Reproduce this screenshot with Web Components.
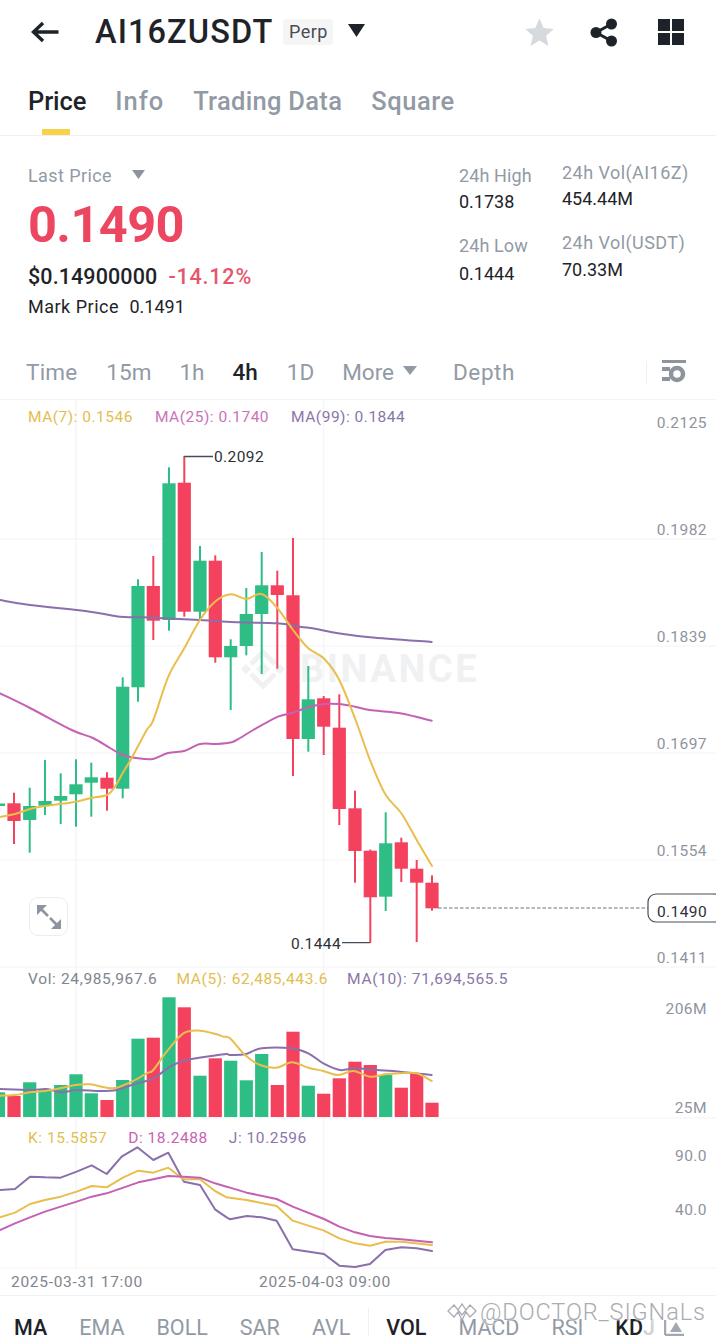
<!DOCTYPE html>
<html lang="en">
<head>
<meta charset="utf-8">
<title>AI16ZUSDT</title>
<style>
html,body{margin:0;padding:0;background:#fff}
body{width:716px;height:1336px;overflow:hidden;position:relative;font-family:Roboto,"Liberation Sans",sans-serif;color:#1E2329}
</style>
</head>
<body>
<app-header></app-header>
<tab-bar></tab-bar>
<price-panel></price-panel>
<interval-bar></interval-bar>
<kline-chart></kline-chart>
<indicator-bar></indicator-bar>
<water-mark></water-mark>
<script>
class Base extends HTMLElement{
  constructor(){super();this.attachShadow({mode:'open'}).innerHTML=this.markup();}
  markup(){return ''}
}
customElements.define('app-header',class extends Base{markup(){return `
<style>
:host{display:flex;align-items:center;height:64px;padding-left:31px;box-sizing:border-box}
svg{display:block;flex:none}
.sym{font-size:32.5px;font-weight:500;letter-spacing:1.1px;margin-left:36px;line-height:40px;color:#1E2329}
.badge{margin-left:10px;width:50px;height:26px;background:#F5F5F5;border-radius:4px;font-size:18px;line-height:26px;text-align:center;color:#474D57;letter-spacing:.5px}
.car{margin-left:15px;margin-top:-4px}
.r{margin-left:auto;display:flex;align-items:center}
</style>
<svg width="28" height="22" viewBox="0 0 28 22"><path d="M27.5 11H3M12 2 2.5 11l9.5 9" fill="none" stroke="#1E2329" stroke-width="3.4"/></svg>
<span class="sym">AI16ZUSDT</span>
<span class="badge">Perp</span>
<svg class="car" width="17" height="13" viewBox="0 0 17 13"><path d="M0 0h17L8.5 13z" fill="#1E2329"/></svg>
<div class="r" style="padding-right:32px">
<svg width="29" height="29" viewBox="0 0 29 29" style="margin-right:36px"><path d="M14.5 0.5 18.7 10l10 1-7.6 6.700 2.300 10.300-8.900-5.400-8.900 5.400 2.300-10.300L.3 11l10-1z" fill="#D6D9DD"/></svg>
<svg width="28" height="29" viewBox="0 0 28 29" style="margin-right:40px"><g fill="#1E2329"><circle cx="21.500" cy="6" r="5.500"/><circle cx="21.500" cy="23" r="5.500"/><circle cx="6" cy="14.500" r="5.500"/></g><path d="M21.500 6 6 14.500 21.500 23" fill="none" stroke="#1E2329" stroke-width="3"/></svg>
<svg width="26" height="26" viewBox="0 0 26 26"><g fill="#1E2329"><rect width="12" height="12"/><rect x="14" width="12" height="12"/><rect y="14" width="12" height="12"/><rect x="14" y="14" width="12" height="12"/></g></svg>
</div>`}});

customElements.define('tab-bar',class extends Base{markup(){return `
<style>
:host{display:flex;height:72px;box-sizing:border-box;border-bottom:1px solid #EEF0F2;padding-left:28px;gap:29px;font-size:25.500px;font-weight:500;color:#929AA5}
.t{display:flex;flex-direction:column;align-items:center;height:71px}
.t span{margin-top:23px;line-height:28px;letter-spacing:var(--ls,0)}
.on{color:#1E2329}
i{margin:auto 0 0 -2px;width:28px;height:6px;background:#F8D34A;display:block}
</style>
<div class="t on" style="--ls:-.1px"><span>Price</span><i></i></div>
<div class="t" style="--ls:1px"><span>Info</span></div>
<div class="t" style="--ls:.3px"><span>Trading Data</span></div>
<div class="t" style="--ls:.55px"><span>Square</span></div>`}});

customElements.define('stat-item',class extends Base{markup(){return `
<style>
:host{display:block;font-size:18px;line-height:26px}
.l{color:#929AA5;letter-spacing:var(--lls,0)}
.v{color:#1E2329;margin-top:var(--gap,1px)}
</style>
<div class="l">${this.getAttribute('label')}</div>
<div class="v">${this.getAttribute('value')}</div>`}});

customElements.define('price-panel',class extends Base{markup(){return `
<style>
:host{display:grid;grid-template-columns:431px 103px 1fr;height:214px;padding-left:28px;box-sizing:border-box}
.a{padding-top:27px}
.lp{display:flex;align-items:center;font-size:18px;line-height:26px;color:#929AA5;letter-spacing:.4px}
.lp svg{margin-left:20px;margin-top:-4px}
.big{font-size:50.500px;font-weight:700;line-height:56px;margin-top:8px;color:#EC4660;letter-spacing:-.6px}
.usd{font-size:21.500px;font-weight:500;line-height:26px;margin-top:11px;color:#1E2329;white-space:nowrap;letter-spacing:.1px}
.usd b{font-weight:500;color:#E5566D;margin-left:5px;letter-spacing:.8px}
.mk{font-size:18px;line-height:26px;margin-top:4px;color:#1E2329;letter-spacing:.5px}
.mk span{margin-left:6px;letter-spacing:0}
.b{padding-top:27px;--gap:0px;--lls:.1px}
.b stat-item+stat-item{margin-top:18px;--gap:2px}
.c{padding-top:24px;--gap:0px;--lls:.45px}
.c stat-item+stat-item{margin-top:18px;--gap:1px}
</style>
<div class="a">
<div class="lp"><span>Last Price</span><svg width="13" height="9" viewBox="0 0 13 9"><path d="M0 0h13L6.500 9z" fill="#8E949E"/></svg></div>
<div class="big">0.1490</div>
<div class="usd">$0.14900000<b> -14.12%</b></div>
<div class="mk">Mark Price<span> 0.1491</span></div>
</div>
<div class="b"><stat-item label="24h High" value="0.1738"></stat-item><stat-item label="24h Low" value="0.1444"></stat-item></div>
<div class="c"><stat-item label="24h Vol(AI16Z)" value="454.44M"></stat-item><stat-item label="24h Vol(USDT)" value="70.33M"></stat-item></div>`}});

customElements.define('interval-bar',class extends Base{markup(){return `
<style>
:host{display:flex;align-items:flex-start;height:50px;box-sizing:border-box;border-bottom:1px solid #F3F4F6;padding:9px 30px 0 26px;gap:28px;font-size:22.500px;line-height:26px;color:#929AA5}
.on{color:#1E2329;font-weight:500}
.m{display:flex;align-items:center}
.m svg{margin:-4px 0 0 9px}
.d{margin-left:8px;letter-spacing:.6px}
.r{margin-left:auto;display:flex;align-items:center;height:26px}
.sep{width:1px;height:23px;background:#EEF0F2;margin-right:15px}
</style>
<span style="letter-spacing:.2px">Time</span><span style="margin-left:1px">15m</span><span>1h</span><span class="on">4h</span><span style="margin-left:1px">1D</span>
<span class="m">More<svg width="14" height="9" viewBox="0 0 14 9"><path d="M0 0h14L7 9z" fill="#929AA5"/></svg></span>
<span class="d">Depth</span>
<div class="r"><i class="sep"></i><svg width="24" height="26" viewBox="0 0 24 26"><g fill="#8E949E"><rect x="0" y="1" width="24" height="3"/><rect x="0" y="8" width="8" height="4"/><rect x="0" y="18" width="8" height="4"/></g><circle cx="15" cy="15" r="6" fill="none" stroke="#8E949E" stroke-width="4.500"/></svg></div>`}});

const CANDLES=[
[-1.5,803.5,806,800,812,'g'],[14,803.3,821,792.7,844,'r'],[29.7,806,820,787.7,852.7,'g'],[45,801,805.7,760,815,'g'],
[60.7,796,800.7,773.3,824,'g'],[76,784.3,794.3,759.3,826.7,'g'],[91.3,777.3,782.7,762.7,816.7,'g'],[107,777.7,788.7,772.3,810.7,'r'],
[122.7,686.7,788.7,677.3,798.3,'g'],[138,586,687.3,579.3,701.7,'g'],[153.3,586,620.7,556,640,'r'],[169,483.3,620,467.3,630.7,'g'],
[184.3,482.7,611.7,456,616.7,'r'],[200,560.7,611.7,546,620.7,'g'],[215.3,560.7,657.3,555.3,662.7,'r'],[230.7,646,657.3,639.3,710,'g'],
[246.3,614,646,588,655.3,'g'],[261.7,585.3,614,552,674,'g'],[277.3,585.3,595,570.7,668.7,'r'],[293,595.3,739,538,776,'r'],
[308.3,699.3,739,666,751.7,'g'],[323.7,698.3,726.7,696,755,'r'],[339.3,727.7,809,694.3,825,'r'],[355,808.3,851,790.7,882.7,'r'],
[370.3,850.7,897.3,849.5,942.7,'r'],[385.7,843.3,896.7,812.3,911,'g'],[401.3,842.3,868.7,837.7,882,'r'],[416.7,868.7,882.7,860,942,'r'],
[432,882.7,908.3,875.3,910.7,'r']];
const VOLS=[1092.3,1096,1082.3,1090,1085,1074.3,1093.3,1100,1080,1038.7,1037.7,997.3,1007.3,1075.7,1058.3,1060.7,1080.3,1054,1085,1031.7,1085.7,1093.7,1078.3,1061.7,1065,1075,1087.7,1073.3,1102.7];
const GREEN='#2EBD85',RED='#F4425E',YEL='#E9BE4C',PINK='#C461B4',PUR='#8A6FAD';
const MA7=[[0,817],[15,814],[30,809],[45,806],[60,804],[76,801.7],[91,798],[107,795],[115,786.7],[122.7,773],[131.7,758],[146.7,730],[153.3,720],[168.3,676.7],[183.3,650],[200,620],[215,601.7],[230.7,594.3],[246.3,599],[261.7,594],[277.3,608],[293,630],[308.3,648.3],[323.7,658.3],[339.3,680],[356.7,723],[370,760],[385.3,794.3],[401.3,813.3],[416.7,840],[432,866]];
const MA25=[[0,693.3],[30,708],[71.7,730],[93,738],[110,748],[122.7,755],[138,758.3],[153,759],[168,753],[185,750.7],[200,744],[216.7,744],[231.7,742.3],[240,738],[253.3,730],[278,716.7],[293,712.7],[308,707.3],[323.7,704],[339,704],[355,706.7],[370,710],[400,713.3],[431.7,720.7]];
const MA99=[[0,600],[30,605],[90,611.7],[120,616.7],[143,617.3],[200,620],[240,622.3],[277,623.3],[300,626.7],[316.7,629],[338,633.3],[370,637.3],[431.7,642]];
const z7=a=>a.map(([x,y])=>[x/3,965+y/3]), z8=a=>a.map(([x,y])=>[230+x/3,965+y/3]);
const V5=[...z7([[0,392],[45,390],[90,382],[135,378],[180,370],[225,360],[270,358],[320,368],[350,368],[395,350],[440,325],[460,315],[500,260],[550,205],[600,197],[650,208],[670,215]]),...z8([[0,220],[45,270],[90,300],[140,308],[185,292],[235,308],[280,318],[325,330],[370,318],[420,335],[465,328],[510,325],[560,325],[605,348]])];
const V10=[...z7([[0,372],[90,375],[140,372],[185,382],[230,375],[300,378],[350,375],[395,360],[460,340],[510,305],[560,285],[640,272],[680,267]]),...z8([[0,270],[45,268],[95,250],[185,250],[235,265],[280,295],[330,315],[375,310],[440,315],[510,320],[605,330]])];
const z9=a=>a.map(([x,y])=>[x/3,1120+y/3]), z10=a=>a.map(([x,y])=>[230+x/3,1120+y/3]);
const KK=[...z9([[0,292],[45,278],[90,252],[135,240],[182,230],[230,215],[275,198],[320,202],[370,172],[415,152],[460,158],[505,143],[550,178],[600,178],[645,213],[680,232]]),...z10([[0,233],[50,240],[140,258],[188,302],[282,332],[328,355],[375,370],[420,377],[466,365],[514,365],[606,375]])];
const DD=[...z9([[0,330],[45,310],[90,292],[135,275],[182,260],[230,245],[275,230],[320,220],[370,203],[415,187],[460,178],[505,168],[550,170],[600,173],[645,190],[680,200]]),...z10([[0,203],[50,218],[140,237],[188,260],[282,297],[328,320],[375,337],[420,348],[466,354],[514,358],[606,367]])];
const JJ=[...z9([[0,210],[45,207],[90,170],[135,172],[182,173],[230,155],[275,136],[320,162],[365,110],[412,82],[460,120],[505,98],[552,185],[600,195],[645,268],[680,292]]),...z10([[0,298],[50,288],[95,292],[140,302],[188,388],[282,402],[328,437],[375,441],[420,432],[466,390],[514,382],[560,385],[606,393]])];
const line=(p,c,w=2)=>`<polyline points="${p.map(a=>a.join(',')).join(' ')}" fill="none" stroke="${c}" stroke-width="${w}" stroke-linejoin="round" stroke-linecap="round"/>`;
const smooth=(p,c,w=2)=>{let d=`M${p[0]}`;for(let i=0;i<p.length-1;i++){const a=p[Math.max(i-1,0)],b=p[i],e=p[i+1],f=p[Math.min(i+2,p.length-1)],k=6;
  d+=`C${b[0]+(e[0]-a[0])/k} ${b[1]+(e[1]-a[1])/k} ${e[0]-(f[0]-b[0])/k} ${e[1]-(f[1]-b[1])/k} ${e[0]} ${e[1]}`;}
  return `<path d="${d}" fill="none" stroke="${c}" stroke-width="${w}" stroke-linecap="round"/>`};

customElements.define('chart-legend',class extends Base{markup(){return `
<style>
:host{display:flex;gap:var(--gap,22px);padding-left:28px;font-size:15.500px;line-height:20px;letter-spacing:var(--ls,.5px);white-space:nowrap}
</style><slot></slot>`}});

customElements.define('expand-button',class extends Base{markup(){return `
<style>
:host{position:absolute;left:29px;top:497px;width:39px;height:39px;box-sizing:border-box;border:1.500px solid #EBEDEF;border-radius:9px;background:#fff;display:flex;align-items:center;justify-content:center}
</style>
<svg width="26" height="26" viewBox="0 0 26 26"><g fill="#8E949E"><path d="M1 1h10L1 11z"/><path d="M25 25H15l10-10z"/></g><path d="M4 4l8 8M14 14l8 8" stroke="#8E949E" stroke-width="2.600"/></svg>`}});

customElements.define('kline-chart',class extends Base{markup(){
  const grid=[539,646,753,860,967,1118,1268].map(y=>`<line x1="0" x2="716" y1="${y}" y2="${y}"/>`).join('')
   +[76,323.7].map(x=>`<line x1="${x}" x2="${x}" y1="400" y2="1268"/>`).join('');
  const candles=CANDLES.map(([x,t,b,h,l,c])=>{const col=c=='g'?GREEN:RED;
    return `<rect x="${x-1}" y="${h}" width="2" height="${l-h}" fill="${col}"/><rect x="${x-6.6}" y="${t}" width="13.2" height="${b-t}" fill="${col}"/>`}).join('');
  const vols=CANDLES.map(([x,,,,,c],i)=>`<rect x="${x-6.6}" y="${VOLS[i]}" width="13.2" height="${1117-VOLS[i]}" fill="${c=='g'?GREEN:RED}"/>`).join('');
  const axis=[['0.2125',423],['0.1982',530],['0.1839',637],['0.1697',744],['0.1554',851],['0.1411',958],['206M',1009],['25M',1108],['90.0',1156],['40.0',1210]]
    .map(([t,y])=>`<text x="707" y="${y+4.500}" text-anchor="end" class="ax">${t}</text>`).join('');
  return `
<style>
:host{display:block;position:relative;height:896px;box-sizing:border-box;border-bottom:1px solid #F0F1F3;font-family:Roboto,"Liberation Sans",sans-serif}
svg.bg{position:absolute;left:0;top:0;display:block}
.pane{position:relative}
.ax{font-size:15.500px;fill:#8E949E;letter-spacing:.45px}
.an{font-size:15.500px;fill:#2B3139;letter-spacing:.4px}
.wm{font-size:38px;font-weight:700;fill:#F0F1F3;letter-spacing:2.600px}
.time{font-size:15.500px;fill:#80858E;letter-spacing:.7px}
</style>
<svg class="bg" width="716" height="896" viewBox="0 400 716 896">
<g stroke="#F3F4F6" stroke-width="1.200">${grid}</g>
<g fill="none" stroke="#F0F1F3" stroke-width="5"><path d="M251 664l12-12 12 12M251 674l12 12 12-12"/></g>
<g fill="#F0F1F3"><path d="M263 662l7 7-7 7-7-7zM246 664l5 5-5 5-5-5zM280 664l5 5-5 5-5-5z"/></g>
<text x="300" y="682" class="wm">BINANCE</text>
${candles}
${smooth(MA99,PUR)}${smooth(MA25,PINK)}${smooth(MA7,YEL)}
<path d="M184.300 456.500H213M342 942.700H370.300" stroke="#474D57" stroke-width="1.300" fill="none"/>
<text x="214" y="462" class="an">0.2092</text>
<text x="291" y="948.500" class="an">0.1444</text>
<line x1="438" x2="648" y1="908" y2="908" stroke="#6E747D" stroke-width="1.200" stroke-dasharray="3.500 2"/>
<rect x="648" y="894" width="74" height="28" rx="8" fill="#fff" stroke="#474D57" stroke-width="1.200"/>
<text x="657" y="916.500" class="an">0.1490</text>
${vols}${smooth(V10,PUR)}${smooth(V5,YEL)}
${line(JJ,PUR)}${line(KK,YEL)}${line(DD,PINK)}
${axis}
<text x="11" y="1287" class="time">2025-03-31 17:00</text>
<text x="259" y="1287" class="time">2025-04-03 09:00</text>
</svg>
<div class="pane" style="height:567px;padding-top:7px;box-sizing:border-box">
<chart-legend style="--gap:22px;--ls:.5px"><span style="color:#E3BE4F">MA(7): 0.1546</span><span style="color:#C973B9">MA(25): 0.1740</span><span style="color:#8A76A8">MA(99): 0.1844</span></chart-legend>
<expand-button></expand-button>
</div>
<div class="pane" style="height:151px;padding-top:2px;box-sizing:border-box">
<chart-legend style="--gap:19px;--ls:.65px"><span style="color:#80858E">Vol: 24,985,967.6</span><span style="color:#E3BE4F">MA(5): 62,485,443.6</span><span style="color:#8A76A8">MA(10): 71,694,565.5</span></chart-legend>
</div>
<div class="pane" style="padding-top:10px;box-sizing:border-box">
<chart-legend style="--gap:21px;--ls:.55px"><span style="color:#E3BE4F">K: 15.5857</span><span style="color:#C961B4">D: 18.2488</span><span style="color:#8A76A8">J: 10.2596</span></chart-legend>
</div>`}});

customElements.define('indicator-bar',class extends Base{markup(){return `
<style>
:host{display:flex;height:40px;box-sizing:border-box;padding:24px 0 0 14px;gap:32px;font-size:21.500px;line-height:16px;color:#929AA5;white-space:nowrap;position:relative}
.on{color:#1E2329;font-weight:500}
.sep{width:1px;height:30px;background:#EEF0F2;margin:-12px -15px 0 -14px;flex:none}
.fade{color:#D0D3D8}
svg{flex:none;margin:-2px 0 0 -23px}
</style>
<span class="on">MA</span><span>EMA</span><span>BOLL</span><span>SAR</span><span>AVL</span><i class="sep"></i>
<span class="on">VOL</span><span>MACD</span><span>RSI</span><span class="on">KD<span class="fade">J</span></span>
<svg width="21" height="18" viewBox="0 0 21 18"><path d="M1 17V2M1 17h19" stroke="#A4A9B1" stroke-width="2.500" fill="none"/><path d="M6 14l6-10 6 10z" fill="#A4A9B1"/></svg>`}});

customElements.define('water-mark',class extends Base{markup(){return `
<style>
:host{position:absolute;left:447px;top:1303px;display:flex;align-items:center;gap:3px;white-space:nowrap;font-size:23.500px;line-height:17px;font-weight:300;color:#A8ACB3;letter-spacing:.9px;text-shadow:0 0 2px #fff,0 0 2px #fff}
</style>
<svg width="30" height="19" viewBox="0 0 30 19"><path d="M1 8l6-6 4 5 4-6 4 6 4-5 6 6-6 6-4-5-4 8-4-8-4 5zM7 2v0M11 7l4 5 4-5" fill="none" stroke="#A8ACB3" stroke-width="1.300"/></svg>
<span>@DOCTOR_SIGNaLs</span>`}});
</script>
</body>
</html>
